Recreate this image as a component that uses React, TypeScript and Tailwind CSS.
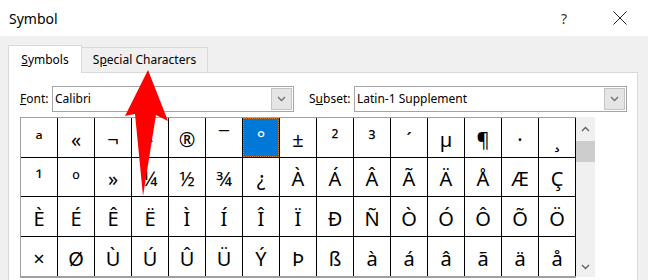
import React from 'react'

const rows: string[][] = [
  ['ª', '«', '¬', '-', '®', '¯', '°', '±', '²', '³', '´', 'µ', '¶', '·', '¸'],
  ['¹', 'º', '»', '¼', '½', '¾', '¿', 'À', 'Á', 'Â', 'Ã', 'Ä', 'Å', 'Æ', 'Ç'],
  ['È', 'É', 'Ê', 'Ë', 'Ì', 'Í', 'Î', 'Ï', 'Ð', 'Ñ', 'Ò', 'Ó', 'Ô', 'Õ', 'Ö'],
  ['×', 'Ø', 'Ù', 'Ú', 'Û', 'Ü', 'Ý', 'Þ', 'ß', 'à', 'á', 'â', 'ã', 'ä', 'å'],
]

function Chevron({ up = false, color = '#606060' }: { up?: boolean; color?: string }) {
  return (
    <svg width="9" height="6" viewBox="0 0 9 6" fill="none">
      <path d={up ? 'M1 5 L4.5 1.5 L8 5' : 'M1 1 L4.5 4.5 L8 1'} stroke={color} strokeWidth="1.3" />
    </svg>
  )
}

function Combo({ value, width }: { value: string; width: string }) {
  return (
    <div className={`${width} h-[26px] flex border border-[#a5a5a5] bg-white`}>
      <div className="flex-1 flex items-center pl-[2px] text-[12px] text-black">{value}</div>
      <div className="w-[21px] m-px bg-[#e5e5e5] border border-[#c4c4c4] flex items-center justify-center">
        <Chevron color="#707070" />
      </div>
    </div>
  )
}

export default function App() {
  return (
    <div className="relative w-[648px] h-[280px] overflow-hidden bg-[#f0f0f0] font-['Noto_Sans',sans-serif] text-black">
      {/* title bar */}
      <div className="h-[36px] bg-white flex items-center pl-[9px] pr-[21px]">
        <div className="text-[14px]">Symbol</div>
        <div className="ml-auto text-[14px] text-[#333]">?</div>
        <svg className="ml-[46px]" width="14" height="14" viewBox="0 0 14 14">
          <path d="M0.5 0.5 L13.5 13.5 M13.5 0.5 L0.5 13.5" stroke="#222" strokeWidth="1" />
        </svg>
      </div>

      <div className="pt-[9px] px-[8px]">
        {/* tabs */}
        <div className="flex items-end">
          <div className="relative z-10 -mb-px w-[74px] h-[28px] bg-white border border-b-0 border-[#d9d9d9] flex items-center justify-center text-[12px]">
            <span><span className="underline">S</span>ymbols</span>
          </div>
          <div className="w-[126px] h-[25px] bg-[#f0f0f0] border-t border-r border-[#d9d9d9] flex items-center justify-center text-[12px]">
            <span>S<span className="underline">p</span>ecial Characters</span>
          </div>
        </div>

        {/* panel */}
        <div className="w-[630px] h-[230px] bg-white border border-[#d9d9d9] pl-[11px] pt-[13px]">
          <div className="flex items-center text-[12px]">
            <div className="w-[32px]"><span className="underline">F</span>ont:</div>
            <Combo value="Calibri" width="w-[242px]" />
            <div className="ml-[15px] w-[45px]">S<span className="underline">u</span>bset:</div>
            <Combo value="Latin-1 Supplement" width="w-[273px]" />
          </div>

          <div className="mt-[5px] flex">
            <div className="border-t border-l border-b-2 border-[#a0a0a0]">
              {rows.map((row, ri) => (
                <div key={ri} className="flex">
                  {row.map((ch, ci) => {
                    const selected = ri === 0 && ci === 6
                    return (
                      <div
                        key={ci}
                        className={`w-[37px] ${ri % 2 === 0 ? 'h-[40px]' : 'h-[39px]'} border-r border-black ${ri < 3 ? 'border-b' : ''} flex`}
                      >
                        <div
                          className={`flex-1 flex items-end justify-center pb-[7px] text-[20px] leading-none ${
                            selected ? 'bg-[#0078d7] text-white border border-dotted border-[#d07a30]' : ''
                          }`}
                        >
                          {ch}
                        </div>
                      </div>
                    )
                  })}
                </div>
              ))}
            </div>

            {/* scrollbar */}
            <div className="w-[19px] h-[160px] bg-[#f0f0f0] flex flex-col">
              <div className="h-[24px] flex items-center justify-center"><Chevron up /></div>
              <div className="h-[21px] bg-[#cdcdcd]" />
              <div className="flex-1" />
              <div className="h-[20px] flex items-center justify-center"><Chevron /></div>
            </div>
          </div>
        </div>
      </div>

      {/* red arrow overlay */}
      <svg className="absolute left-0 top-0 pointer-events-none" width="648" height="280" viewBox="0 0 648 280">
        <polygon points="148,70 168,121 156,115 143,196 135,114 125,116" fill="#ff0000" />
      </svg>
    </div>
  )
}
